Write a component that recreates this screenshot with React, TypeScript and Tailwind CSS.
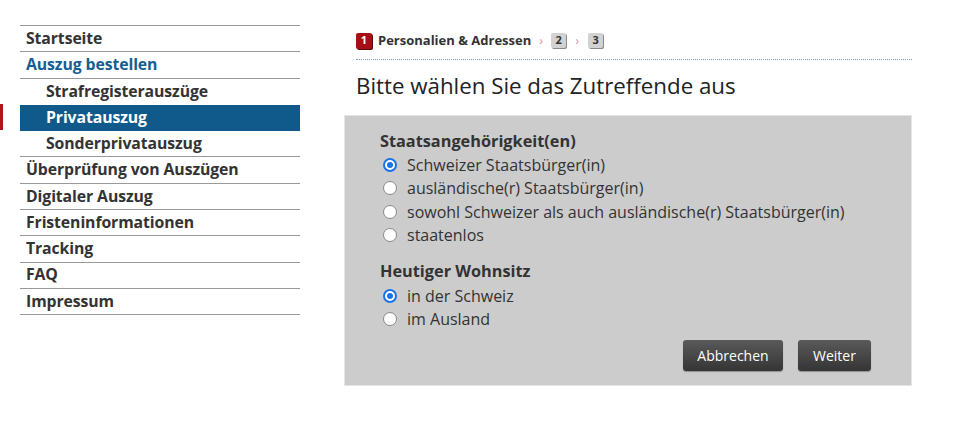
import React from 'react';

const nav: { label: string; sub?: boolean; active?: boolean; open?: boolean }[] = [
  { label: 'Startseite' },
  { label: 'Auszug bestellen', open: true },
  { label: 'Strafregisterauszüge', sub: true },
  { label: 'Privatauszug', sub: true, active: true },
  { label: 'Sonderprivatauszug', sub: true },
  { label: 'Überprüfung von Auszügen' },
  { label: 'Digitaler Auszug' },
  { label: 'Fristeninformationen' },
  { label: 'Tracking' },
  { label: 'FAQ' },
  { label: 'Impressum' },
];

function Radio({ checked, label }: { checked?: boolean; label: string }) {
  return (
    <label className="flex items-center h-[23.5px] pl-[3px]">
      <span
        className={
          checked
            ? 'w-[14px] h-[14px] rounded-full border-[2px] border-[#1a73e8] bg-white flex items-center justify-center'
            : 'w-[14px] h-[14px] rounded-full border border-[#888] bg-white'
        }
      >
        {checked && <span className="w-[6px] h-[6px] rounded-full bg-[#1a73e8]" />}
      </span>
      <span className="ml-[10px]">{label}</span>
    </label>
  );
}

function Step({ n, active }: { n: number; active?: boolean }) {
  return (
    <span
      className={
        active
          ? 'inline-flex items-center justify-center w-[16px] h-[16px] rounded-[2px] bg-[#a50f16] text-white text-[11px] font-bold shadow-[1px_1px_0_#5a0a0d]'
          : 'inline-flex items-center justify-center w-[15px] h-[15px] rounded-[2px] bg-[#d2d2d2] text-[#333] text-[11px] font-bold shadow-[1px_1px_0_#8a8a8a]'
      }
    >
      {n}
    </span>
  );
}

const btn =
  'h-[31px] rounded-[3px] bg-gradient-to-b from-[#5a5a5a] to-[#353535] text-white text-[14px] shadow-[0_1px_1px_rgba(0,0,0,0.3)]';

export default function App() {
  return (
    <div className="w-[960px] h-[436px] bg-white relative font-['Open_Sans',sans-serif] text-[#333]">
      <div className="absolute left-0 top-[104px] w-[3px] h-[26px] bg-[#b5121b]" />
      <div className="flex pt-[25px]">
        <nav className="ml-[20px] w-[280px] border-t border-[#999]">
          {nav.map((item) => (
            <div
              key={item.label}
              className={
                'h-[26.3px] flex items-center text-[15.8px] font-bold tracking-[-0.1px] ' +
                (item.sub ? 'pl-[26px] ' : 'pl-[6px] border-b border-[#999] ') +
                (item.active ? 'bg-[#0f5a8a] text-white ' : '') +
                (item.open ? 'text-[#135e93] ' : '') +
                (item.label === 'Sonderprivatauszug' ? 'border-b border-[#999]' : '')
              }
            >
              {item.label}
            </div>
          ))}
        </nav>
        <main className="ml-[44px] w-[568px]">
          <div className="ml-[12px] flex items-center h-[30px] pt-[1px] text-[13px] font-bold">
            <Step n={1} active />
            <span className="ml-[6px]">Personalien &amp; Adressen</span>
            <span className="mx-[8px] text-[#e09aa0] font-normal">›</span>
            <Step n={2} />
            <span className="mx-[9px] text-[#e09aa0] font-normal">›</span>
            <Step n={3} />
          </div>
          <div className="ml-[12px] mt-[4px] border-t border-dotted border-[#7a9cc0]" />
          <h1 className="ml-[12px] mt-[12px] text-[22.3px] leading-[28px] text-[#222] font-normal">
            Bitte wählen Sie das Zutreffende aus
          </h1>
          <section className="mt-[15px] h-[271px] bg-[#cccccc] border border-[#e6e6e6] pl-[35px] pt-[14px] flex flex-col text-[16px] text-[#333]">
            <h2 className="font-bold leading-[22px] text-[16.3px]">Staatsangehörigkeit(en)</h2>
            <div className="mt-[1px]">
              <Radio checked label="Schweizer Staatsbürger(in)" />
              <Radio label="ausländische(r) Staatsbürger(in)" />
              <Radio label="sowohl Schweizer als auch ausländische(r) Staatsbürger(in)" />
              <Radio label="staatenlos" />
            </div>
            <h2 className="font-bold leading-[22px] mt-[13px] text-[16.3px]">Heutiger Wohnsitz</h2>
            <div className="mt-[2px]">
              <Radio checked label="in der Schweiz" />
              <Radio label="im Ausland" />
            </div>
            <div className="flex justify-end gap-[15px] mr-[40px] mt-[9px]">
              <button className={btn + ' w-[100px]'}>Abbrechen</button>
              <button className={btn + ' w-[73px]'}>Weiter</button>
            </div>
          </section>
        </main>
      </div>
    </div>
  );
}
